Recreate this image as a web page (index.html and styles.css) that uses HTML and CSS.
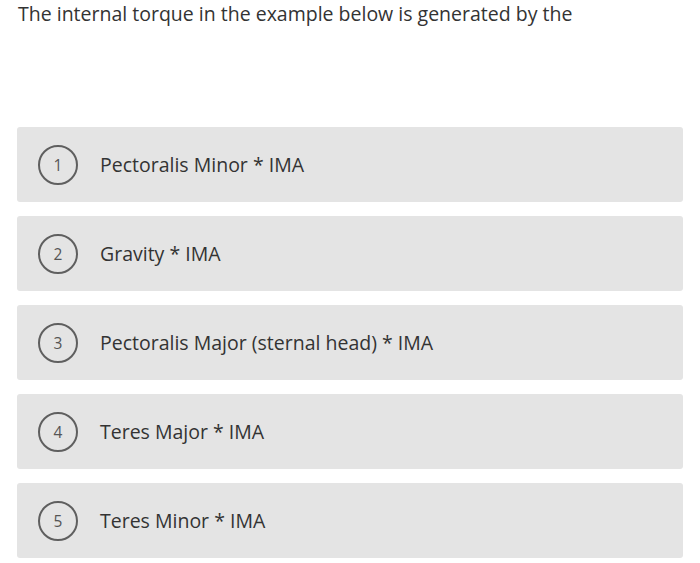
FILE: index.html
```html
<!DOCTYPE html>
<html>
<head>
<meta charset="utf-8">
<link rel="stylesheet" href="styles.css">
</head>
<body>
<div class="page">
  <p class="question">The internal torque in the example below is generated by the</p>
  <ul class="options">
    <li class="option"><span class="num">1</span><span class="label">Pectoralis Minor * IMA</span></li>
    <li class="option"><span class="num">2</span><span class="label">Gravity * IMA</span></li>
    <li class="option"><span class="num">3</span><span class="label">Pectoralis Major (sternal head) * IMA</span></li>
    <li class="option"><span class="num">4</span><span class="label">Teres Major * IMA</span></li>
    <li class="option"><span class="num">5</span><span class="label">Teres Minor * IMA</span></li>
  </ul>
</div>
</body>
</html>
```
FILE: styles.css
```css
html, body {
  margin: 0;
  padding: 0;
  background: #ffffff;
}
.page {
  font-family: "Open Sans", "Liberation Sans", sans-serif;
  color: #333333;
  padding: 0 17px 0 17px;
}
.question {
  margin: 0;
  padding: 0 0 0 1px;
  font-size: 19.5px;
  line-height: 28px;
  color: #333333;
}
.options {
  list-style: none;
  margin: 99px 0 0 0;
  padding: 0;
  display: flex;
  flex-direction: column;
  gap: 14px;
}
.option {
  height: 75px;
  background: #e4e4e4;
  border-radius: 3px;
  display: flex;
  align-items: center;
  padding-left: 21px;
}
.num {
  width: 36px;
  height: 36px;
  border: 2px solid #5f5f5f;
  border-radius: 50%;
  display: flex;
  align-items: center;
  justify-content: center;
  font-size: 15.5px;
  color: #555555;
  flex: none;
}
.label {
  margin-left: 22px;
  font-size: 19.5px;
  color: #333333;
}
```
